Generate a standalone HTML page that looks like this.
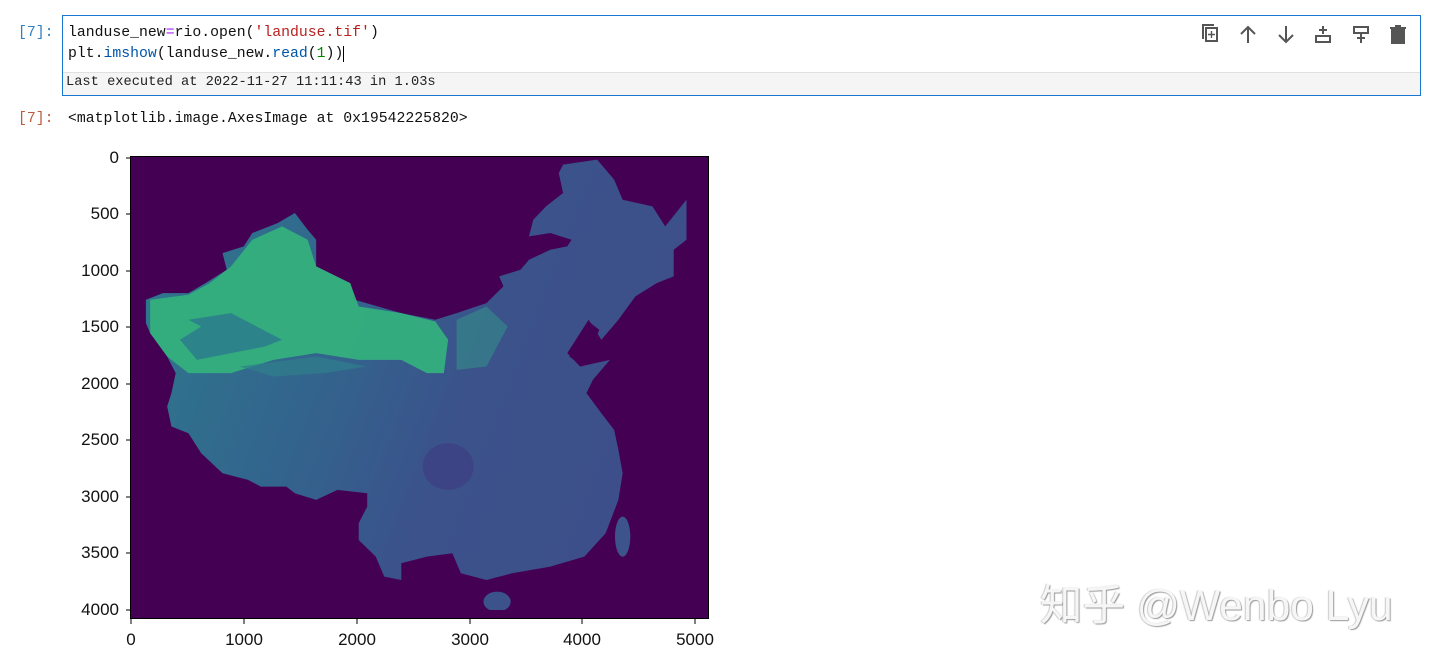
<!DOCTYPE html>
<html><head><meta charset="utf-8"><style>
body{margin:0;width:1429px;height:663px;background:#fff;position:relative;overflow:hidden;font-family:"Liberation Sans","Noto Sans CJK SC",sans-serif}
.mono{font-family:"Liberation Mono",monospace;font-size:14.8px;position:absolute;white-space:pre}
.cell{position:absolute;left:62px;top:15px;width:1359px;height:81px;border:1px solid #1976d2;box-sizing:border-box}
.foot{position:absolute;left:0;right:0;bottom:0;height:22px;background:#f5f5f5;border-top:1px solid #e0e0e0}
.yl{position:absolute;right:1310px;font-size:17px;color:#111;transform:translateY(-50%)}
.xl{position:absolute;top:630px;font-size:17px;color:#111;transform:translateX(-50%)}
.wm{position:absolute;left:1040px;top:572px;font-size:42.5px;color:#f6f6f6;text-shadow:1px 1px 1px #9a9a9a,-1px 0 1px #c8c8c8;white-space:nowrap}
</style></head><body>
<div class="mono" style="left:18px;top:25px;color:#307fc1">[7]:</div>
<div class="cell">
<div class="mono" style="left:5px;top:9px;color:#111">landuse_new<span style="color:#a2f">=</span>rio.open(<span style="color:#ba2121">'landuse.tif'</span>)</div>
<div class="mono" style="left:5px;top:30px;color:#111">plt.<span style="color:#0055aa">imshow</span>(landuse_new.<span style="color:#0055aa">read</span>(<span style="color:#080">1</span>))<span style="border-left:1px solid #000"></span></div>
<div class="foot"><div class="mono" style="left:3px;top:2px;color:#222;font-size:13.7px">Last executed at 2022-11-27 11:11:43 in 1.03s</div></div>
</div>
<svg style="position:absolute;left:1195px;top:22px" width="220" height="26" fill="none" stroke="#555" stroke-width="2">
<rect x="11" y="6" width="11" height="13"/><path d="M8 17V3h11"/><path d="M16.5 9v7M13 12.5h7" stroke-width="1.4"/>
<path d="M53 21V5M46 12l7-7 7 7"/>
<path d="M91 4v16M84 13l7 7 7-7"/>
<path d="M121 14h14v6h-14zM128 4v8M124 8h8"/>
<path d="M159 5h14v6h-14zM166 11v10M162 16h8"/>
<path d="M197 8h12v13h-12z" fill="#555"/><path d="M195 6h16M200 4h6"/>
</svg>
<div class="mono" style="left:18px;top:111px;color:#bf5b3d">[7]:</div>
<div class="mono" style="left:68px;top:111px;color:#111">&lt;matplotlib.image.AxesImage at 0x19542225820&gt;</div>

<div style="position:absolute;left:130px;top:156px;width:579px;height:463px;background:#440154;border:1px solid #000;box-sizing:border-box"></div>
<svg style="position:absolute;left:131px;top:158px" width="564" height="452" viewBox="165 55 1325 1355" preserveAspectRatio="none">
<defs><linearGradient id="g" x1="0" x2="1" y1="0" y2="0.3"><stop offset="0" stop-color="#2d7a8d"/><stop offset="0.45" stop-color="#33638d"/><stop offset="0.7" stop-color="#3b528b"/><stop offset="1" stop-color="#3d4f8a"/></linearGradient></defs>
<polygon fill="url(#g)" points="1180,75 1260,60 1300,120 1320,180 1390,200 1420,260 1470,180 1470,300 1440,330 1440,410 1400,430 1350,470 1310,540 1270,600 1240,540 1190,640 1220,680 1290,660 1250,720 1235,760 1270,820 1300,870 1310,930 1320,1000 1310,1080 1280,1180 1230,1250 1150,1280 1060,1300 1000,1320 940,1300 920,1240 860,1250 800,1270 800,1320 760,1310 740,1250 700,1200 700,1150 720,1100 720,1060 650,1050 600,1080 550,1060 530,1040 470,1040 440,1020 380,1000 330,940 300,880 260,860 250,800 260,760 270,700 250,650 210,580 200,550 200,480 240,460 300,460 340,430 390,390 380,340 430,320 450,280 510,250 550,220 580,270 600,300 600,380 680,430 690,480 800,520 880,540 930,520 1000,490 1040,440 1030,410 1080,390 1100,360 1150,330 1190,320 1200,300 1150,280 1100,290 1110,240 1140,200 1180,160 1170,100"/>
<polygon fill="#34b27d" opacity="0.92" points="210,480 300,465 350,430 400,380 450,300 520,260 580,300 600,380 680,430 700,500 800,520 880,545 910,600 900,700 860,700 800,660 700,660 600,640 500,660 400,700 300,700 250,650 210,580"/>
<polygon fill="#2c7d8c" opacity="0.85" points="280,600 330,560 300,540 400,520 460,560 520,600 480,620 400,640 320,660"/>
<polygon fill="#2f7f8c" opacity="0.7" points="420,680 600,650 720,680 620,700 500,710"/>
<polygon fill="#33998a" opacity="0.5" points="930,540 1000,500 1050,560 1000,680 930,690"/>
<polygon fill="#440154" points="1240,545 1265,570 1245,640 1225,680 1195,650 1210,610"/>
<ellipse cx="910" cy="980" rx="60" ry="70" fill="#3d3f85" opacity="0.7"/>
<ellipse cx="1025" cy="1385" rx="32" ry="30" fill="#3c528b"/>
<ellipse cx="1320" cy="1190" rx="18" ry="60" fill="#3c548b"/>
</svg>
<div class="yl" style="top:158px">0</div><div class="yl" style="top:214px">500</div><div class="yl" style="top:271px">1000</div><div class="yl" style="top:327px">1500</div><div class="yl" style="top:384px">2000</div><div class="yl" style="top:440px">2500</div><div class="yl" style="top:497px">3000</div><div class="yl" style="top:553px">3500</div><div class="yl" style="top:610px">4000</div>
<div class="xl" style="left:131px">0</div><div class="xl" style="left:244px">1000</div><div class="xl" style="left:357px">2000</div><div class="xl" style="left:470px">3000</div><div class="xl" style="left:582px">4000</div><div class="xl" style="left:695px">5000</div>
<svg style="position:absolute;left:120px;top:150px" width="600" height="480" stroke="#000" stroke-width="1">
<path d="M6 8h5M6 64h5M6 121h5M6 177h5M6 234h5M6 290h5M6 347h5M6 403h5M6 460h5"/>
<path d="M11 469v5M124 469v5M237 469v5M350 469v5M462 469v5M575 469v5"/>
</svg>
<div class="wm">知乎 @Wenbo Lyu</div>
</body></html>
